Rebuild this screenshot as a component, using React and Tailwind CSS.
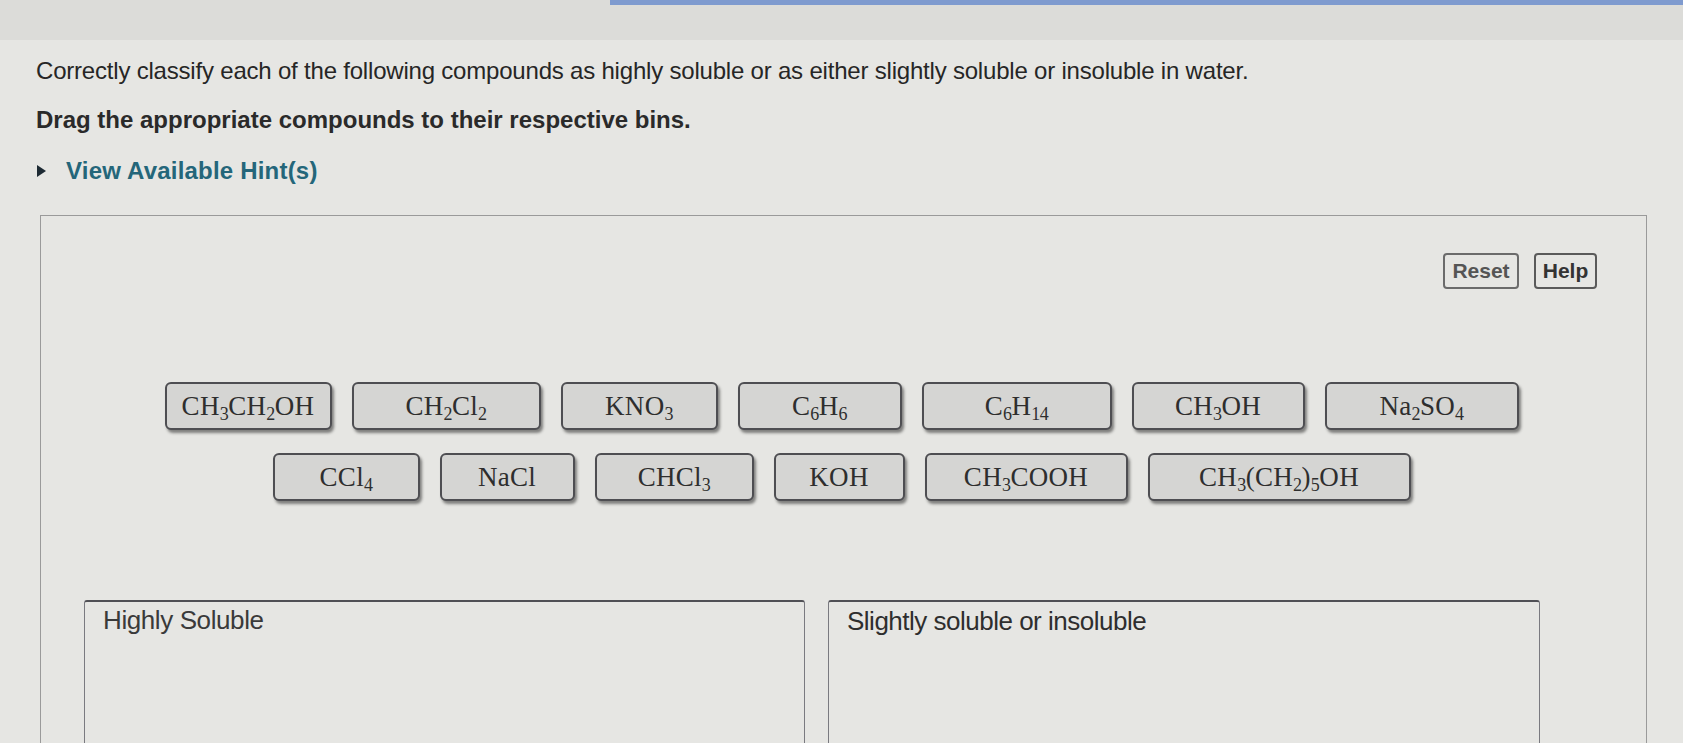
import React from 'react';

const rowOne = [
  { f: 'CH3CH2OH', w: 'w-[167px]' },
  { f: 'CH2Cl2', w: 'w-[189px]' },
  { f: 'KNO3', w: 'w-[157px]' },
  { f: 'C6H6', w: 'w-[164px]' },
  { f: 'C6H14', w: 'w-[190px]' },
  { f: 'CH3OH', w: 'w-[173px]' },
  { f: 'Na2SO4', w: 'w-[194px]' },
];

const rowTwo = [
  { f: 'CCl4', w: 'w-[147px]' },
  { f: 'NaCl', w: 'w-[135px]' },
  { f: 'CHCl3', w: 'w-[159px]' },
  { f: 'KOH', w: 'w-[131px]' },
  { f: 'CH3COOH', w: 'w-[203px]' },
  { f: 'CH3(CH2)5OH', w: 'w-[263px]' },
];

// digits in a formula are always subscripts here
function Formula({ text }) {
  const parts = text.split(/(\d+)/).filter(Boolean);
  return (
    <span className="tracking-[0.3px]">
      {parts.map((p, i) =>
        /^\d+$/.test(p) ? (
          <sub key={i} className="text-[18px] relative top-[5px] align-baseline tracking-[-0.5px]">{p}</sub>
        ) : (
          <span key={i}>{p}</span>
        )
      )}
    </span>
  );
}

function Chip({ f, w }) {
  return (
    <div
      className={`${w} h-[48px] flex items-center justify-center rounded-[6px] border-2 border-[#4e4e52] bg-[#d5d5d3] shadow-[2px_3px_3px_rgba(0,0,0,0.45)] text-[27px] leading-none text-[#2e2e2e]`}
      style={{ fontFamily: '"Liberation Serif", serif' }}
    >
      <Formula text={f} />
    </div>
  );
}

export default function App() {
  return (
    <div
      className="w-full h-[743px] overflow-hidden bg-[#e6e6e3] text-[#262626]"
      style={{ fontFamily: '"Liberation Sans", Arial, sans-serif' }}
    >
      <div className="h-[40px] bg-[#dcdcd9]">
        <div className="ml-[610px] h-[5px] bg-[#7f9bcf]" />
      </div>

      <div className="pl-[36px]">
        <p className="mt-[17px] text-[24px] leading-[28px] tracking-[-0.2px]">
          Correctly classify each of the following compounds as highly soluble or as either slightly soluble or insoluble in water.
        </p>
        <p className="mt-[21px] text-[24px] leading-[28px] font-bold tracking-[0px] text-[#2a2a2a]">
          Drag the appropriate compounds to their respective bins.
        </p>
        <div className="mt-[23px] flex items-center gap-[19px] text-[#24667a]">
          <svg width="11" height="14" viewBox="0 0 11 14">
            <path d="M1 1 L10 7 L1 13 Z" fill="#1d2a33" />
          </svg>
          <span className="text-[24px] leading-[28px] font-bold tracking-[0.2px]">View Available Hint(s)</span>
        </div>
      </div>

      <div className="ml-[40px] mt-[30px] w-[1607px] h-[560px] border border-[#9a9a9a] pt-[37px]">
        <div className="flex justify-end gap-[15px] pr-[49px]">
          <button className="w-[76px] h-[36px] rounded-[4px] border-2 border-[#6b6b6b] text-[21px] font-bold text-[#555]">
            Reset
          </button>
          <button className="w-[63px] h-[36px] rounded-[4px] border-2 border-[#5a5a5a] text-[21px] font-bold text-[#333]">
            Help
          </button>
        </div>

        <div className="mt-[93px] flex flex-col items-center gap-[23px] pr-[4px]">
          <div className="flex gap-[20px]">
            {rowOne.map((c) => (
              <Chip key={c.f} {...c} />
            ))}
          </div>
          <div className="flex gap-[20px]">
            {rowTwo.map((c) => (
              <Chip key={c.f} {...c} />
            ))}
          </div>
        </div>

        <div className="mt-[99px] ml-[43px] flex gap-[23px]">
          <div className="w-[721px] h-[200px] border border-[#7a7a80] border-t-2 border-t-[#505055] rounded-t-[3px] px-[18px] pt-[3px]">
            <span className="text-[26px] leading-[30px] text-[#3a3a3a] tracking-[-0.4px]">Highly Soluble</span>
          </div>
          <div className="w-[712px] h-[200px] border border-[#7a7a80] border-t-2 border-t-[#505055] rounded-t-[3px] px-[18px] pt-[4px]">
            <span className="text-[26px] leading-[30px] text-[#2e2e2e] tracking-[-0.5px]">Slightly soluble or insoluble</span>
          </div>
        </div>
      </div>
    </div>
  );
}
